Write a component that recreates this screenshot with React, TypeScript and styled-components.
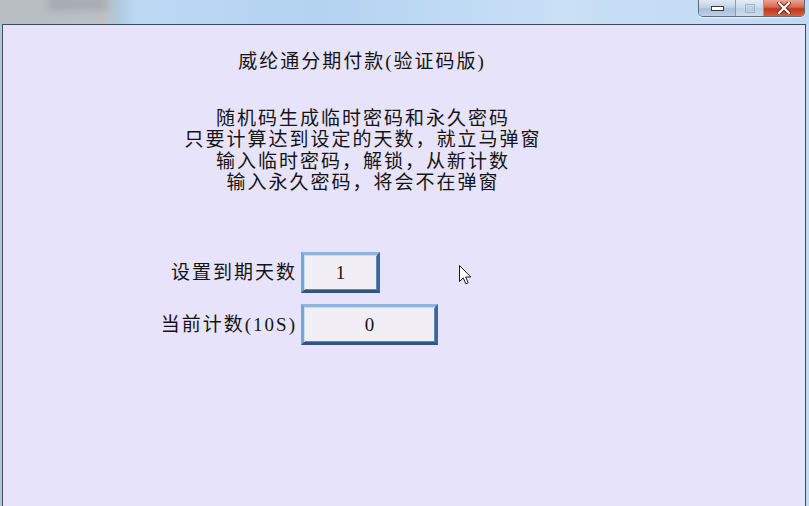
import { FC } from "react";
import styled, { createGlobalStyle } from "styled-components";

const GlobalStyle = createGlobalStyle`
  html, body {
    margin: 0;
    padding: 0;
    overflow: hidden;
    background: #c4dcf3;
  }
`;

const cjk = `"Liberation Serif", "Noto Sans CJK SC", serif`;

const Frame = styled.div`
  position: relative;
  width: 809px;
  height: 506px;
  display: flex;
  flex-direction: column;
  background: linear-gradient(90deg, #aebfcc 0, #c0d9f1 3px, #c4dcf3 100%);
  overflow: hidden;
`;

const TitleBar = styled.div`
  position: relative;
  height: 24px;
  display: flex;
  justify-content: flex-end;
  align-items: flex-start;
  padding-right: 4px;
  background: linear-gradient(
    90deg,
    #b6bcc0 0,
    #bdc2c5 105px,
    #b0c9de 118px,
    #bcd9f4 135px,
    #b3d3f1 320px,
    #c9e0f6 560px,
    #bfdaf3 100%
  );
`;

const Smudge = styled.div`
  position: absolute;
  left: 48px;
  top: -2px;
  width: 60px;
  height: 12px;
  background: #8e969c;
  opacity: 0.55;
  filter: blur(4px);
`;

const Controls = styled.div`
  display: flex;
  height: 16px;
  border: 1px solid #5b6b80;
  border-top: none;
  border-radius: 0 0 5px 5px;
  overflow: hidden;
  box-shadow: 0 1px 0 rgba(255, 255, 255, 0.6);
`;

const CtrlButton = styled.div<{ $w: number; $kind: "min" | "max" | "close" }>`
  width: ${(p) => p.$w}px;
  display: flex;
  align-items: center;
  justify-content: center;
  border-left: ${(p) => (p.$kind === "min" ? "none" : "1px solid #8a9cb2")};
  background: ${(p) =>
    p.$kind === "close"
      ? "linear-gradient(180deg, #e9a495 0, #d6684f 45%, #c2371c 55%, #d5603f 100%)"
      : p.$kind === "max"
      ? "linear-gradient(180deg, #e4edf7 0, #ccdbec 45%, #bccfe4 55%, #cddcee 100%)"
      : "linear-gradient(180deg, #e0e9f4 0, #c2d3e7 45%, #a9bfd8 55%, #bfd0e5 100%)"};
`;

const Client = styled.div`
  flex: 1;
  margin: 0 3px 0 2px;
  border: 1px solid #3f4b58;
  border-bottom: none;
  background: #e7e3fa;
  display: flex;
  flex-direction: column;
  align-items: stretch;
  color: #141414;
  font-family: ${cjk};
  font-size: 19px;
  letter-spacing: 2px;
`;

const Heading = styled.div`
  margin-top: 26px;
  line-height: 22px;
  text-align: center;
  padding-right: 84px;
`;

const Notes = styled.div`
  margin-top: 35px;
  line-height: 21.3px;
  text-align: center;
  padding-right: 82px;
`;

const Form = styled.div`
  margin-top: 59px;
  display: grid;
  grid-template-columns: 294px auto;
  column-gap: 4px;
  row-gap: 11px;
  align-items: center;
  justify-items: start;
`;

const Label = styled.div`
  justify-self: end;
  line-height: 22px;
  white-space: nowrap;
`;

const Field = styled.div<{ $w: number }>`
  width: ${(p) => p.$w}px;
  height: 41px;
  box-sizing: border-box;
  display: flex;
  align-items: center;
  justify-content: center;
  background: #f1eff5;
  border-style: solid;
  border-width: 3px;
  border-color: #8eb4de #3c6797 #2f5583 #7aa3d2;
  box-shadow: inset 1px 1px 0 #c7dbf1, inset -1px -1px 0 #5d86b6;
  letter-spacing: 0;
`;

const Cursor = styled.svg`
  position: absolute;
  left: 459px;
  top: 265px;
`;

const notes = [
  "随机码生成临时密码和永久密码",
  "只要计算达到设定的天数，就立马弹窗",
  "输入临时密码，解锁，从新计数",
  "输入永久密码，将会不在弹窗",
];

const App: FC = () => {
  return (
    <>
      <GlobalStyle />
      <Frame>
        <TitleBar>
          <Smudge />
          <Controls>
            <CtrlButton $w={36} $kind="min">
              <svg width="13" height="6" viewBox="0 0 13 6">
                <rect x="0.5" y="1.5" width="12" height="4" fill="#fff" stroke="#2f3d4f" />
              </svg>
            </CtrlButton>
            <CtrlButton $w={27} $kind="max">
              <svg width="10" height="9" viewBox="0 0 10 9">
                <rect x="0.5" y="0.5" width="9" height="8" fill="none" stroke="#9fb1c6" />
                <rect x="2.5" y="2.5" width="5" height="4" fill="none" stroke="#b8c7d8" />
              </svg>
            </CtrlButton>
            <CtrlButton $w={40} $kind="close">
              <svg width="14" height="12" viewBox="0 0 14 12">
                <path
                  d="M2 1 L12 11 M12 1 L2 11"
                  stroke="#5a2418"
                  strokeWidth="4"
                  strokeLinecap="square"
                />
                <path
                  d="M2 1 L12 11 M12 1 L2 11"
                  stroke="#fff"
                  strokeWidth="2.2"
                  strokeLinecap="square"
                />
              </svg>
            </CtrlButton>
          </Controls>
        </TitleBar>
        <Client>
          <Heading>威纶通分期付款(验证码版)</Heading>
          <Notes>
            {notes.map((line) => (
              <div key={line}>{line}</div>
            ))}
          </Notes>
          <Form>
            <Label>设置到期天数</Label>
            <Field $w={79}>1</Field>
            <Label>当前计数(10S)</Label>
            <Field $w={137}>0</Field>
          </Form>
        </Client>
        <Cursor width="13" height="21" viewBox="0 0 13 21">
          <path
            d="M0.5 0.5 L0.5 16.5 L4.3 12.9 L6.8 18.8 L9.2 17.8 L6.7 12 L11.8 12 Z"
            fill="#fff"
            stroke="#1a1a1a"
            strokeWidth="1"
            strokeLinejoin="miter"
          />
        </Cursor>
      </Frame>
    </>
  );
};

export default App;
